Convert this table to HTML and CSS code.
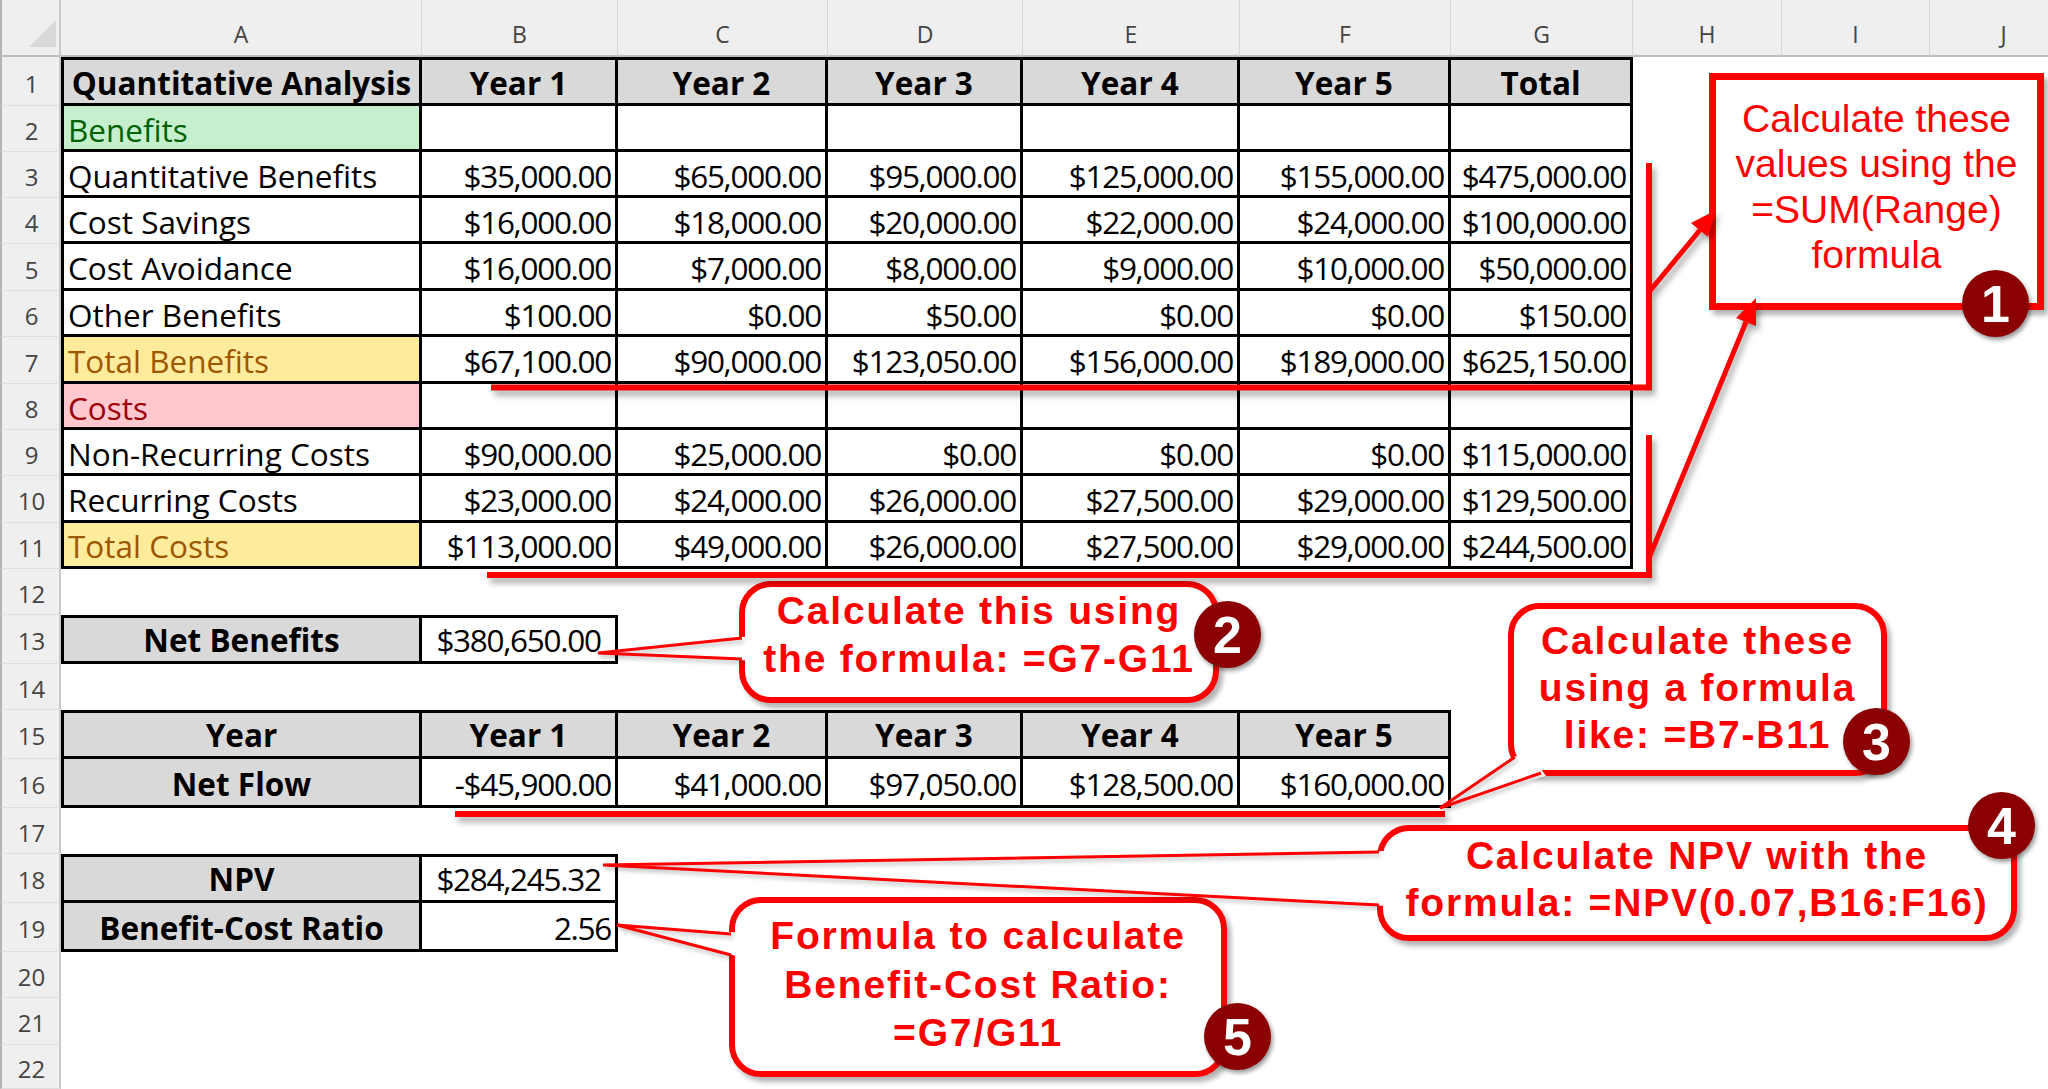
FILE: index.html
```html
<!DOCTYPE html>
<html>
<head>
<meta charset="utf-8">
<title>Quantitative Analysis</title>
<link rel="stylesheet" href="styles.css">
</head>
<body>
<div class="page">
  <div class="sheet">
    <div class="corner"><span class="tri"></span></div>
    <div class="ch">A</div><div class="ch">B</div><div class="ch">C</div><div class="ch">D</div><div class="ch">E</div>
    <div class="ch">F</div><div class="ch">G</div><div class="ch">H</div><div class="ch">I</div><div class="ch">J</div>

    <div class="rn">1</div>
    <div class="c h t l">Quantitative Analysis</div><div class="c h t">Year 1</div><div class="c h t">Year 2</div><div class="c h t">Year 3</div><div class="c h t">Year 4</div><div class="c h t">Year 5</div><div class="c h t">Total</div>
    <div class="x s3"></div>

    <div class="rn">2</div>
    <div class="c l good">Benefits</div><div class="c"></div><div class="c"></div><div class="c"></div><div class="c"></div><div class="c"></div><div class="c"></div>
    <div class="x s3"></div>

    <div class="rn">3</div>
    <div class="c l">Quantitative Benefits</div><div class="c r">$35,000.00</div><div class="c r">$65,000.00</div><div class="c r">$95,000.00</div><div class="c r">$125,000.00</div><div class="c r">$155,000.00</div><div class="c r">$475,000.00</div>
    <div class="x s3"></div>

    <div class="rn">4</div>
    <div class="c l">Cost Savings</div><div class="c r">$16,000.00</div><div class="c r">$18,000.00</div><div class="c r">$20,000.00</div><div class="c r">$22,000.00</div><div class="c r">$24,000.00</div><div class="c r">$100,000.00</div>
    <div class="x s3"></div>

    <div class="rn">5</div>
    <div class="c l">Cost Avoidance</div><div class="c r">$16,000.00</div><div class="c r">$7,000.00</div><div class="c r">$8,000.00</div><div class="c r">$9,000.00</div><div class="c r">$10,000.00</div><div class="c r">$50,000.00</div>
    <div class="x s3"></div>

    <div class="rn">6</div>
    <div class="c l">Other Benefits</div><div class="c r">$100.00</div><div class="c r">$0.00</div><div class="c r">$50.00</div><div class="c r">$0.00</div><div class="c r">$0.00</div><div class="c r">$150.00</div>
    <div class="x s3"></div>

    <div class="rn">7</div>
    <div class="c l neutral">Total Benefits</div><div class="c r">$67,100.00</div><div class="c r">$90,000.00</div><div class="c r">$123,050.00</div><div class="c r">$156,000.00</div><div class="c r">$189,000.00</div><div class="c r">$625,150.00</div>
    <div class="x s3"></div>

    <div class="rn">8</div>
    <div class="c l bad">Costs</div><div class="c"></div><div class="c"></div><div class="c"></div><div class="c"></div><div class="c"></div><div class="c"></div>
    <div class="x s3"></div>

    <div class="rn">9</div>
    <div class="c l">Non-Recurring Costs</div><div class="c r">$90,000.00</div><div class="c r">$25,000.00</div><div class="c r">$0.00</div><div class="c r">$0.00</div><div class="c r">$0.00</div><div class="c r">$115,000.00</div>
    <div class="x s3"></div>

    <div class="rn">10</div>
    <div class="c l">Recurring Costs</div><div class="c r">$23,000.00</div><div class="c r">$24,000.00</div><div class="c r">$26,000.00</div><div class="c r">$27,500.00</div><div class="c r">$29,000.00</div><div class="c r">$129,500.00</div>
    <div class="x s3"></div>

    <div class="rn">11</div>
    <div class="c l neutral">Total Costs</div><div class="c r">$113,000.00</div><div class="c r">$49,000.00</div><div class="c r">$26,000.00</div><div class="c r">$27,500.00</div><div class="c r">$29,000.00</div><div class="c r">$244,500.00</div>
    <div class="x s3"></div>

    <div class="rn">12</div>
    <div class="x s10"></div>

    <div class="rn">13</div>
    <div class="c h t l">Net Benefits</div><div class="c t ctr num">$380,650.00</div>
    <div class="x s8"></div>

    <div class="rn">14</div>
    <div class="x s10"></div>

    <div class="rn">15</div>
    <div class="c h t l">Year</div><div class="c h t">Year 1</div><div class="c h t">Year 2</div><div class="c h t">Year 3</div><div class="c h t">Year 4</div><div class="c h t">Year 5</div>
    <div class="x s4"></div>

    <div class="rn">16</div>
    <div class="c h l">Net Flow</div><div class="c r">-$45,900.00</div><div class="c r">$41,000.00</div><div class="c r">$97,050.00</div><div class="c r">$128,500.00</div><div class="c r">$160,000.00</div>
    <div class="x s4"></div>

    <div class="rn">17</div>
    <div class="x s10"></div>

    <div class="rn">18</div>
    <div class="c h t l">NPV</div><div class="c t ctr num">$284,245.32</div>
    <div class="x s8"></div>

    <div class="rn">19</div>
    <div class="c h l">Benefit-Cost Ratio</div><div class="c r">2.56</div>
    <div class="x s8"></div>

    <div class="rn">20</div>
    <div class="x s10"></div>
    <div class="rn">21</div>
    <div class="x s10"></div>
    <div class="rn">22</div>
    <div class="x s10"></div>
  </div>

  <div class="callout box1 plain">
    <p>Calculate these</p>
    <p>values using the</p>
    <p>=SUM(Range)</p>
    <p>formula</p>
  </div>
  <div class="callout box2 bold">
    <p>Calculate this using</p>
    <p>the formula: =G7-G11</p>
  </div>
  <div class="callout box3 bold">
    <p>Calculate these</p>
    <p>using a formula</p>
    <p>like: =B7-B11</p>
  </div>
  <div class="callout box4 bold">
    <p>Calculate NPV with the</p>
    <p>formula: =NPV(0.07,B16:F16)</p>
  </div>
  <div class="callout box5 bold">
    <p>Formula to calculate</p>
    <p>Benefit-Cost Ratio:</p>
    <p>=G7/G11</p>
  </div>

  <svg class="overlay" width="2048" height="1089" viewBox="0 0 2048 1089">
    <g class="shadowed" stroke="#ff0000" fill="none">
      <polyline points="491,387.5 1649,387.5 1649,163" stroke-width="6"/>
      <polyline points="487,575 1649,575 1649,435" stroke-width="6"/>
      <line x1="455" y1="814" x2="1445" y2="814" stroke-width="6"/>
      <line x1="1649" y1="292" x2="1700" y2="230" stroke-width="5"/>
      <polygon points="1716,210 1708,237 1691,223" fill="#ff0000" stroke="none"/>
      <line x1="1649" y1="558" x2="1746" y2="322" stroke-width="5"/>
      <polygon points="1756,298 1756,326 1736,318" fill="#ff0000" stroke="none"/>
    </g>
    <g fill="#ffffff" stroke="none">
      <polygon points="598,653 747,636.5 747,660.5"/>
      <polygon points="1440,808 1515,756 1533,758 1546,776"/>
      <polygon points="603,865 1386,851 1386,906"/>
      <polygon points="617,925 738,932.5 738,956.5"/>
    </g>
    <g class="tailshadow" stroke="#ff0000" stroke-width="3" fill="none">
      <polyline points="742,638 598,653 742,659"/>
      <polyline points="1515,757 1440,808 1541,773"/>
      <polyline points="1379,852 603,865 1379,905"/>
      <polyline points="731,934 617,925 731,955"/>
    </g>
  </svg>

  <div class="badge b1">1</div>
  <div class="badge b2">2</div>
  <div class="badge b3">3</div>
  <div class="badge b4">4</div>
  <div class="badge b5">5</div>
</div>
</body>
</html>
```

FILE: styles.css
```css
* {
  box-sizing: border-box;
  margin: 0;
  padding: 0;
}

html, body {
  width: 2048px;
  height: 1089px;
  overflow: hidden;
  background: #ffffff;
}

body {
  font-family: "Open Sans", "Noto Sans", sans-serif;
  color: #000;
}

.page {
  position: relative;
  width: 2048px;
  height: 1089px;
  overflow: hidden;
}

/* ---------- spreadsheet grid ---------- */
.sheet {
  display: grid;
  grid-template-columns: 61px 361px 196px 210px 195px 217px 211px 182px 149px 148px 148px;
  grid-template-rows: 57px 49px 46px 46px 46px 47px 46px 47px 46px 46px 46.5px 46px 46.5px 48.5px 46.5px 48.5px 49px 46px 49px 49px 46px 47px 44.5px;
  width: 2078px;
}

.corner {
  position: relative;
  background: #efefef;
  border-left: 2px solid #b4b4b4;
  border-right: 2px solid #c9c9c9;
  border-bottom: 2px solid #bdbdbd;
}

.tri {
  position: absolute;
  left: 27px;
  top: 20px;
  width: 27px;
  height: 27px;
  background: #d9d9d9;
  clip-path: polygon(100% 0, 100% 100%, 0 100%);
}

.ch {
  display: flex;
  align-items: center;
  justify-content: center;
  padding-top: 12px;
  background: #efefef;
  color: #444;
  font-size: 23px;
  border-right: 1px solid #d6d6d6;
  border-bottom: 2px solid #bdbdbd;
}

.rn {
  display: flex;
  align-items: center;
  justify-content: center;
  padding-top: 4px;
  padding-left: 2px;
  background: #efefef;
  color: #444;
  font-size: 24px;
  border-left: 2px solid #b4b4b4;
  border-right: 2px solid #c9c9c9;
  border-bottom: 1px solid #dedede;
}

.x {
  background: #ffffff;
}

.s3 { grid-column: span 3; }
.s4 { grid-column: span 4; }
.s8 { grid-column: span 8; }
.s10 { grid-column: span 10; }

.c {
  display: flex;
  align-items: center;
  padding: 3px 4px 0 4px;
  font-size: 31.5px;
  white-space: nowrap;
  overflow: hidden;
  background: #ffffff;
  border-right: 3px solid #000;
  border-bottom: 3px solid #000;
}

.t { border-top: 3px solid #000; padding-top: 1px; }
.l { border-left: 3px solid #000; }
.r { justify-content: flex-end; letter-spacing: -1.3px; }
.ctr { justify-content: center; }
.num { letter-spacing: -1.3px; }

.h {
  background: #d9d9d9;
  font-weight: 700;
  font-size: 31.5px;
  justify-content: center;
}

.good { background: #c6efce; color: #006100; }
.neutral { background: #ffeb9c; color: #9c5700; }
.bad { background: #ffc7ce; color: #9c0006; }

/* ---------- callouts ---------- */
.callout {
  position: absolute;
  display: flex;
  flex-direction: column;
  align-items: center;
  justify-content: center;
  background: #ffffff;
  border: 6px solid #ff0000;
  border-radius: 32px;
  color: #ff0000;
  font-family: "Liberation Sans", Arial, sans-serif;
  white-space: nowrap;
  box-shadow: 4px 5px 5px rgba(0, 0, 0, 0.3);
}

.callout.plain {
  font-size: 39px;
  line-height: 45.4px;
}

.callout.bold {
  font-size: 39px;
  font-weight: 700;
  letter-spacing: 1.8px;
  line-height: 48px;
}

.box1 {
  left: 1709px;
  top: 73px;
  width: 335px;
  height: 237px;
  border-width: 7px;
  border-radius: 0;
  justify-content: flex-start;
  padding-top: 16px;
}

.box2 {
  left: 739px;
  top: 581px;
  width: 480px;
  height: 122px;
  justify-content: flex-start;
}

.box3 {
  left: 1508px;
  top: 603px;
  width: 379px;
  height: 173px;
  padding-bottom: 5px;
}

.box3.bold { line-height: 47px; }

.box4 {
  left: 1377px;
  top: 825px;
  width: 640px;
  height: 116px;
  padding-bottom: 8px;
}

.box4.bold { line-height: 47px; }

.box5 {
  left: 729px;
  top: 897px;
  width: 498px;
  height: 180px;
  padding-bottom: 4px;
}

.box5.bold { line-height: 48.5px; }

/* ---------- overlay lines ---------- */
.overlay {
  position: absolute;
  left: 0;
  top: 0;
}

.shadowed {
  filter: drop-shadow(3px 5px 3px rgba(0, 0, 0, 0.35));
}

.tailshadow {
  filter: drop-shadow(2px 3px 2px rgba(0, 0, 0, 0.25));
}

/* ---------- number badges ---------- */
.badge {
  position: absolute;
  width: 67px;
  height: 67px;
  border-radius: 50%;
  background: #8b0000;
  color: #ffffff;
  display: flex;
  align-items: center;
  justify-content: center;
  font-family: "Liberation Sans", Arial, sans-serif;
  font-weight: 700;
  font-size: 52px;
  line-height: 1;
  box-shadow: 2px 3px 4px rgba(0, 0, 0, 0.4);
}

.b1 { left: 1962px; top: 270px; }
.b2 { left: 1194px; top: 601px; }
.b3 { left: 1843px; top: 708px; }
.b4 { left: 1968px; top: 792px; }
.b5 { left: 1204px; top: 1003px; }
```
